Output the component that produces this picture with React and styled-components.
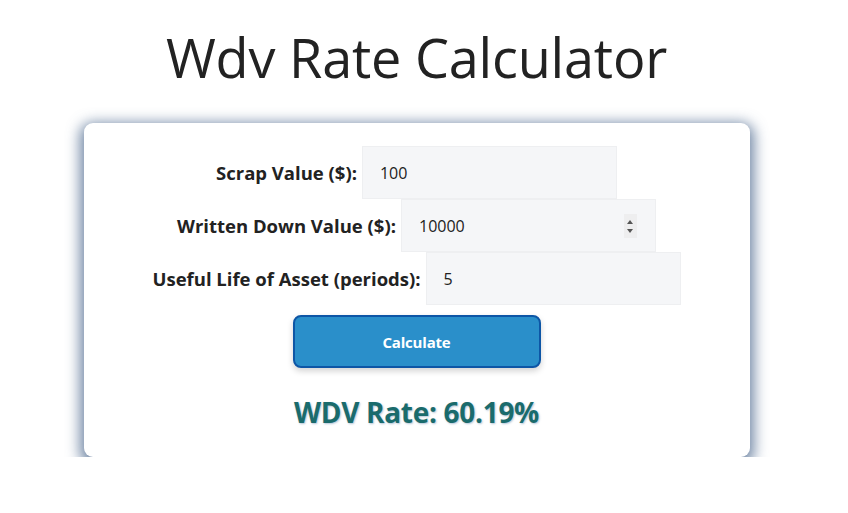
import styled, { createGlobalStyle } from 'styled-components';

const GlobalStyle = createGlobalStyle`
  body {
    margin: 0;
    background: #ffffff;
    font-family: "Open Sans", "Noto Sans", sans-serif;
    color: #222;
  }
`;

const Page = styled.div`
  width: 833px;
  display: flex;
  flex-direction: column;
  align-items: center;
`;

const Title = styled.h1`
  margin: 17px 0 0;
  font-size: 54px;
  font-weight: 400;
  line-height: 80px;
  color: #222;
  letter-spacing: -0.2px;
`;

const Card = styled.div`
  margin-top: 26px;
  width: 666px;
  box-sizing: border-box;
  padding: 23px 0 27px;
  background: #fff;
  border-radius: 9px;
  box-shadow: 0 4px 14px 4px rgba(65, 95, 135, 0.75);
  display: flex;
  flex-direction: column;
  align-items: center;
`;

const Row = styled.div`
  display: flex;
  align-items: center;
  justify-content: center;
  height: 53px;
`;

const Label = styled.label`
  font-weight: 700;
  font-size: 18.5px;
  color: #222;
  margin-right: 5px;
`;

const InputBox = styled.div`
  position: relative;
  width: 255px;
  height: 53px;
  box-sizing: border-box;
  background: #f5f6f8;
  border: 1px solid #eeeff1;
  display: flex;
  align-items: center;
  padding-left: 17px;
  font-size: 16px;
  color: #222;
`;

const Spinner = styled.div`
  position: absolute;
  right: 18px;
  top: 14px;
  width: 13px;
  height: 24px;
  background: #eeeeef;
  display: flex;
  flex-direction: column;
  align-items: center;
  justify-content: center;
  gap: 5px;
`;

const Arrow = styled.span`
  width: 0;
  height: 0;
  border-left: 3.5px solid transparent;
  border-right: 3.5px solid transparent;
  ${(p) => (p.$up ? 'border-bottom: 4px solid #555;' : 'border-top: 4px solid #555;')}
`;

const Button = styled.button`
  margin-top: 10px;
  width: 248px;
  height: 53px;
  background: #2a8fca;
  border: 2px solid #0d56a6;
  border-radius: 8px;
  color: #fff;
  font-family: "Open Sans", "Noto Sans", sans-serif;
  font-weight: 700;
  font-size: 15px;
  letter-spacing: -0.2px;
  box-shadow: 0 3px 6px rgba(0, 0, 0, 0.18);
`;

const Result = styled.div`
  margin-top: 26px;
  font-size: 28px;
  line-height: 36px;
  font-weight: 700;
  color: #1a6b6c;
  text-shadow: 1px 1px 2px rgba(40, 90, 140, 0.35);
  letter-spacing: -0.3px;
`;

export default function App() {
  return (
    <Page>
      <GlobalStyle />
      <Title>Wdv Rate Calculator</Title>
      <Card>
        <Row>
          <Label>Scrap Value ($):</Label>
          <InputBox>100</InputBox>
        </Row>
        <Row>
          <Label>Written Down Value ($):</Label>
          <InputBox>
            10000
            <Spinner>
              <Arrow $up />
              <Arrow />
            </Spinner>
          </InputBox>
        </Row>
        <Row>
          <Label>Useful Life of Asset (periods):</Label>
          <InputBox>5</InputBox>
        </Row>
        <Button>Calculate</Button>
        <Result>WDV Rate: 60.19%</Result>
      </Card>
    </Page>
  );
}
